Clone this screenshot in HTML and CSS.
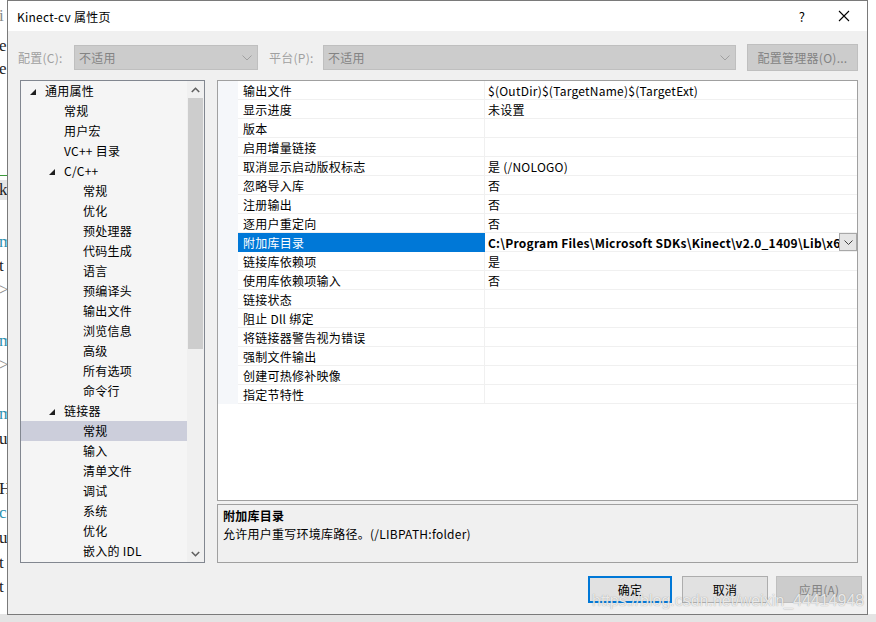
FILE: index.html
```html
<!DOCTYPE html>
<html lang="zh-cn">
<head>
    <meta charset="UTF-8">
    <meta name="viewport" content="width=device-width, initial-scale=1.0">
    <title>Kinect-cv 属性页</title>
    <link rel="stylesheet" href="styles.css">
</head>
<body>
    <div class="desktop">
        <!-- editor behind the dialog, only a sliver shows -->
        <div class="editor">
            <span class="ch grey" style="top:6px">i</span>
            <span class="ch" style="top:36px">e</span>
            <span class="ch" style="top:59px">e</span>
            <span class="greenline"></span>
            <span class="ch hl" style="top:180px">k</span>
            <span class="ch teal" style="top:232px">m</span>
            <span class="ch" style="top:256px">t</span>
            <span class="ch grey" style="top:280px">&gt;</span>
            <span class="ch teal" style="top:331px">m</span>
            <span class="ch grey" style="top:355px">&gt;</span>
            <span class="ch teal" style="top:404px">m</span>
            <span class="ch" style="top:429px">u</span>
            <span class="ch" style="top:479px">H</span>
            <span class="ch teal" style="top:503px">c</span>
            <span class="ch" style="top:528px">u</span>
            <span class="ch" style="top:553px">t</span>
            <span class="ch" style="top:577px">t</span>
        </div>

        <div class="dialog">
            <div class="titlebar">
                <span class="title">Kinect-cv 属性页</span>
                <span class="help">?</span>
                <span class="close">
                    <svg width="12" height="12" viewBox="0 0 12 12"><path d="M1 1L11 11M11 1L1 11" stroke="#000" stroke-width="1.1" fill="none"/></svg>
                </span>
            </div>

            <div class="toolbar">
                <label class="lbl lbl-conf">配置(C):</label>
                <div class="combo combo-conf">
                    <span>不适用</span>
                    <svg width="10" height="6" viewBox="0 0 10 6"><path d="M0.5 0.5L5 5L9.5 0.5" stroke="#a0a0a0" fill="none"/></svg>
                </div>
                <label class="lbl lbl-plat">平台(P):</label>
                <div class="combo combo-plat">
                    <span>不适用</span>
                    <svg width="10" height="6" viewBox="0 0 10 6"><path d="M0.5 0.5L5 5L9.5 0.5" stroke="#a0a0a0" fill="none"/></svg>
                </div>
                <button class="btn btn-off btn-manager">配置管理器(O)...</button>
            </div>

            <div class="content">
                <div class="tree">
                    <ul class="tree-list">
                        <li class="lv0"><span class="arrow"></span>通用属性</li>
                        <li class="lv1">常规</li>
                        <li class="lv1">用户宏</li>
                        <li class="lv1">VC++ 目录</li>
                        <li class="lv1"><span class="arrow"></span>C/C++</li>
                        <li class="lv2">常规</li>
                        <li class="lv2">优化</li>
                        <li class="lv2">预处理器</li>
                        <li class="lv2">代码生成</li>
                        <li class="lv2">语言</li>
                        <li class="lv2">预编译头</li>
                        <li class="lv2">输出文件</li>
                        <li class="lv2">浏览信息</li>
                        <li class="lv2">高级</li>
                        <li class="lv2">所有选项</li>
                        <li class="lv2">命令行</li>
                        <li class="lv1"><span class="arrow"></span>链接器</li>
                        <li class="lv2 sel">常规</li>
                        <li class="lv2">输入</li>
                        <li class="lv2">清单文件</li>
                        <li class="lv2">调试</li>
                        <li class="lv2">系统</li>
                        <li class="lv2">优化</li>
                        <li class="lv2">嵌入的 IDL</li>
                    </ul>
                    <div class="vscroll">
                        <div class="sb-btn">
                            <svg width="9" height="6" viewBox="0 0 9 6"><path d="M0.8 5L4.5 1.3L8.2 5" stroke="#606060" stroke-width="1.6" fill="none"/></svg>
                        </div>
                        <div class="sb-track"><div class="sb-thumb"></div></div>
                        <div class="sb-btn">
                            <svg width="9" height="6" viewBox="0 0 9 6"><path d="M0.8 1L4.5 4.7L8.2 1" stroke="#606060" stroke-width="1.6" fill="none"/></svg>
                        </div>
                    </div>
                </div>

                <div class="right">
                    <div class="grid">
                        <div class="row"><span class="gutter"></span><span class="name">输出文件</span><span class="value">$(OutDir)$(TargetName)$(TargetExt)</span></div>
                        <div class="row"><span class="gutter"></span><span class="name">显示进度</span><span class="value">未设置</span></div>
                        <div class="row"><span class="gutter"></span><span class="name">版本</span><span class="value"></span></div>
                        <div class="row"><span class="gutter"></span><span class="name">启用增量链接</span><span class="value"></span></div>
                        <div class="row"><span class="gutter"></span><span class="name">取消显示启动版权标志</span><span class="value">是 (/NOLOGO)</span></div>
                        <div class="row"><span class="gutter"></span><span class="name">忽略导入库</span><span class="value">否</span></div>
                        <div class="row"><span class="gutter"></span><span class="name">注册输出</span><span class="value">否</span></div>
                        <div class="row"><span class="gutter"></span><span class="name">逐用户重定向</span><span class="value">否</span></div>
                        <div class="row row-sel"><span class="gutter"></span><span class="name">附加库目录</span><span class="value">C:\Program Files\Microsoft SDKs\Kinect\v2.0_1409\Lib\x64<span class="drop"><svg width="9" height="5" viewBox="0 0 9 5"><path d="M0.5 0.5L4.5 4.5L8.5 0.5" stroke="#404040" fill="none"/></svg></span></span></div>
                        <div class="row"><span class="gutter"></span><span class="name">链接库依赖项</span><span class="value">是</span></div>
                        <div class="row"><span class="gutter"></span><span class="name">使用库依赖项输入</span><span class="value">否</span></div>
                        <div class="row"><span class="gutter"></span><span class="name">链接状态</span><span class="value"></span></div>
                        <div class="row"><span class="gutter"></span><span class="name">阻止 Dll 绑定</span><span class="value"></span></div>
                        <div class="row"><span class="gutter"></span><span class="name">将链接器警告视为错误</span><span class="value"></span></div>
                        <div class="row"><span class="gutter"></span><span class="name">强制文件输出</span><span class="value"></span></div>
                        <div class="row"><span class="gutter"></span><span class="name">创建可热修补映像</span><span class="value"></span></div>
                        <div class="row"><span class="gutter"></span><span class="name">指定节特性</span><span class="value"></span></div>
                    </div>
                    <div class="desc">
                        <div class="desc-title">附加库目录</div>
                        <div class="desc-text">允许用户重写环境库路径。(/LIBPATH:folder)</div>
                    </div>
                </div>
            </div>

            <div class="footer">
                <button class="btn btn-ok">确定</button>
                <button class="btn btn-cancel">取消</button>
                <button class="btn btn-off btn-apply">应用(A)</button>
            </div>
        </div>

        <div class="watermark">https://blog.csdn.net/weixin_44414948</div>
    </div>
</body>
</html>
```

FILE: styles.css
```css
* {
    margin: 0;
    padding: 0;
    box-sizing: border-box;
}
body {
    width: 876px;
    height: 622px;
    overflow: hidden;
    background-color: #ffffff;
    font-family: "Segoe UI", "Noto Sans CJK SC", sans-serif;
    font-size: 12px;
    letter-spacing: 0.25px;
    color: #000;
}
.desktop {
    position: relative;
    width: 876px;
    height: 622px;
    background: linear-gradient(to bottom, #ffffff 0, #ffffff 614px, #e4e4e4 614px);
}

/* editor peeking out on the left */
.editor {
    position: absolute;
    left: 0;
    top: 0;
    width: 7px;
    height: 614px;
    overflow: hidden;
    font-family: "Liberation Serif", serif;
    font-size: 17px;
    color: #222;
}
.ch {
    position: absolute;
    left: -1px;
    line-height: 20px;
}
.grey { color: #8a8a8a; }
.teal { color: #2b91af; }
.hl {
    background-color: #e6e6e6;
    width: 8px;
}
.greenline {
    position: absolute;
    left: 0;
    top: 175px;
    width: 7px;
    height: 1px;
    background-color: #3c9a3c;
}

/* the dialog window */
.dialog {
    position: absolute;
    left: 7px;
    top: 0;
    width: 861px;
    height: 615px;
    border: 1px solid #7a7a7a;
    background-color: #f0f0f0;
    display: flex;
    flex-direction: column;
}
.titlebar {
    height: 30px;
    background-color: #ffffff;
    display: flex;
    align-items: center;
    padding-left: 9px;
}
.title {
    flex: 1;
    font-size: 12px;
}
.help {
    width: 20px;
    font-size: 13px;
    margin-right: 26px;
    text-align: center;
}
.close {
    width: 18px;
    margin-right: 11px;
    display: flex;
    align-items: center;
}

.toolbar {
    height: 49px;
    display: flex;
    align-items: center;
    padding: 4px 9px 0 10px;
}
.lbl {
    color: #a0a0a0;
}
.lbl-conf { width: 56px; }
.lbl-plat { width: 54px; margin-left: 11px; }
.combo {
    height: 25px;
    background-color: #cccccc;
    border: 1px solid #bfbfbf;
    color: #838383;
    display: flex;
    align-items: center;
    justify-content: space-between;
    padding: 0 5px 0 4px;
    font-size: 12px;
}
.combo-conf { width: 184px; }
.combo-plat { width: 413px; }
.btn {
    font-family: "Segoe UI", "Noto Sans CJK SC", sans-serif;
    font-size: 12px;
    letter-spacing: 0.25px;
    height: 27px;
    background-color: #e1e1e1;
    border: 1px solid #adadad;
    color: #000;
}
.btn-off {
    background-color: #cccccc;
    border-color: #bfbfbf;
    color: #838383;
}
.btn-manager {
    width: 111px;
    margin-left: 11px;
}

.content {
    display: flex;
    gap: 12px;
    padding: 0 9px 0 12px;
    height: 483px;
}

/* tree */
.tree {
    width: 185px;
    height: 483px;
    border: 1px solid #828790;
    background-color: #f5f5f5;
    display: flex;
}
.tree-list {
    list-style: none;
    flex: 1;
}
.tree-list li {
    height: 20px;
    line-height: 20px;
    white-space: nowrap;
}
.lv0 { padding-left: 24px; }
.lv1 { padding-left: 43px; }
.lv2 { padding-left: 62px; }
.tree-list .sel {
    background-color: #cccedb;
}
.arrow {
    display: inline-block;
    width: 15px;
    margin-left: -15px;
    height: 20px;
    vertical-align: top;
    position: relative;
}
.arrow::before {
    content: "";
    position: absolute;
    left: 0;
    top: 8px;
    border-style: solid;
    border-width: 0 0 6px 6px;
    border-color: transparent transparent #1e1e1e transparent;
}
.vscroll {
    width: 17px;
    background-color: #f0f0f0;
    display: flex;
    flex-direction: column;
}
.sb-btn {
    height: 17px;
    display: flex;
    align-items: center;
    justify-content: center;
}
.sb-track {
    flex: 1;
}
.sb-thumb {
    margin-left: 1px;
    width: 15px;
    height: 251px;
    background-color: #cdcdcd;
}

/* property grid */
.right {
    width: 641px;
    display: flex;
    flex-direction: column;
    gap: 3px;
}
.grid {
    height: 421px;
    border: 1px solid #a0a0a0;
    background-color: #ffffff;
}
.row {
    display: flex;
    height: 19px;
    line-height: 16px;
}
.gutter {
    width: 20px;
    background-color: #f5f7fa;
}
.name {
    width: 247px;
    padding: 2px 0 0 5px;
    border-bottom: 1px solid #f0f0f0;
    border-right: 1px solid #f0f0f0;
    white-space: nowrap;
}
.value {
    flex: 1;
    padding: 2px 0 0 3px;
    border-bottom: 1px solid #f0f0f0;
    white-space: nowrap;
    overflow: hidden;
    position: relative;
}
.row-sel .name {
    background-color: #0078d7;
    color: #ffffff;
    border-color: #0078d7;
}
.row-sel .value {
    font-weight: bold;
    padding-right: 20px;
}
.drop {
    position: absolute;
    right: 0;
    top: 0;
    width: 18px;
    height: 18px;
    background-color: #e5e5e5;
    border: 1px solid #a8a8a8;
    display: flex;
    align-items: center;
    justify-content: center;
}

.desc {
    height: 59px;
    border: 1px solid #a0a0a0;
    background-color: #f0f0f0;
    padding: 2px 5px;
    line-height: 18px;
}
.desc-title {
    font-weight: bold;
}

/* buttons */
.footer {
    display: flex;
    justify-content: flex-end;
    padding: 13px 5px 0 0;
}
.btn-ok {
    width: 84px;
    border: 2px solid #0078d7;
}
.btn-cancel {
    width: 86px;
    margin-left: 10px;
}
.btn-apply {
    width: 86px;
    margin-left: 8px;
}

.watermark {
    position: absolute;
    left: 592px;
    top: 592px;
    font-family: "Liberation Sans", Arial, sans-serif;
    font-size: 16px;
    letter-spacing: 0;
    color: rgba(255, 255, 255, 0.8);
    text-shadow: 0 0 1px rgba(120, 120, 120, 0.8);
    white-space: nowrap;
}
```
